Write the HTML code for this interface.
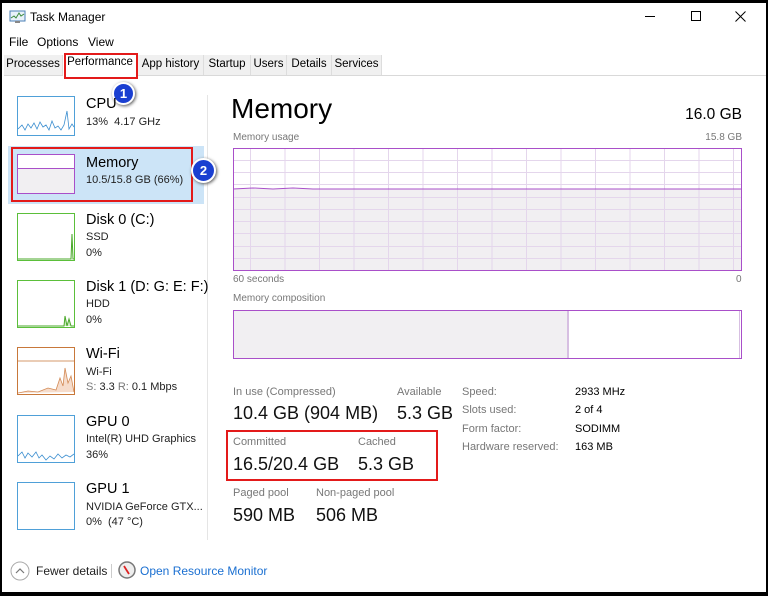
<!DOCTYPE html>
<html><head><meta charset="utf-8"><style>
*{margin:0;padding:0;box-sizing:border-box}
body{width:768px;height:596px;background:#000;font-family:"Liberation Sans",sans-serif;position:relative;overflow:hidden;color:#000}
.win{position:absolute;left:2px;top:3px;width:764px;height:589px;background:#fff}
.a{position:absolute;white-space:nowrap}
.tab{position:absolute;top:55px;height:20px;font-size:11.5px;padding-top:3px;background:#f0f0f0;border-right:1px solid #ddd;text-align:center}
.thumb{position:absolute;left:17px;width:58px;height:48px;border:1px solid}
.t1{font-size:14.5px;left:86px}
.t2{font-size:11px;left:86px;color:#222}
.lbl{font-size:11px;color:#777}
.val{font-size:18px;color:#111}
.sp{font-size:11px}
</style></head><body>
<div class="win"></div>
<svg class="a" style="left:9px;top:10px" width="17" height="14" viewBox="0 0 17 14"><rect x="1" y="1" width="15" height="10" fill="#e8f1fa" stroke="#4a7fb5"/><polyline points="2,8 5,6 7,8 10,3 12,6 15,4" fill="none" stroke="#3a8a3a"/><rect x="6" y="11" width="5" height="2" fill="#888"/></svg>
<div class="a" style="left:30px;top:10px;font-size:12px">Task Manager</div>
<div class="a" style="left:645px;top:16px;width:10px;height:1px;background:#000"></div>
<div class="a" style="left:691px;top:11px;width:10px;height:10px;border:1px solid #000"></div>
<svg class="a" style="left:735px;top:11px" width="11" height="11"><path d="M0.5 0.5L10.5 10.5M10.5 0.5L0.5 10.5" stroke="#000" stroke-width="1"/></svg>
<div class="a" style="left:9px;top:35px;font-size:12px">File</div>
<div class="a" style="left:37px;top:35px;font-size:12px">Options</div>
<div class="a" style="left:88px;top:35px;font-size:12px">View</div>
<div class="a" style="left:4px;top:75px;width:762px;height:1px;background:#d9d9d9"></div>
<div class="tab" style="left:4px;width:59px">Processes</div>
<div class="tab" style="left:63px;width:75px;background:#fff;top:53px;height:23px">Performance</div>
<div class="tab" style="left:138px;width:66px">App history</div>
<div class="tab" style="left:204px;width:47px">Startup</div>
<div class="tab" style="left:251px;width:36px">Users</div>
<div class="tab" style="left:287px;width:45px">Details</div>
<div class="tab" style="left:332px;width:50px">Services</div>
<div class="a" style="left:64px;top:53px;width:74px;height:26px;border:2px solid #e31a1a"></div>
<div class="a" style="left:112px;top:82px;width:23px;height:23px;border-radius:50%;background:#1a3fd1;border:2px solid #fff;box-shadow:1px 1px 3px #555;color:#fff;font-weight:bold;font-size:13px;text-align:center;line-height:19px">1</div>
<div class="a" style="left:207px;top:95px;width:1px;height:445px;background:#e5e5e5"></div>
<div class="a" style="left:8px;top:146px;width:196px;height:58px;background:#cce4f7"></div>
<div class="a" style="left:11px;top:147px;width:182px;height:55px;border:2px solid #e31a1a"></div>
<div class="a" style="left:191px;top:158px;width:25px;height:25px;border-radius:50%;background:#1a3fd1;border:2px solid #fff;box-shadow:1px 1px 3px #555;color:#fff;font-weight:bold;font-size:13px;text-align:center;line-height:21px">2</div>

<div class="thumb" style="top:96px;height:40px;border-color:#4fa0d8"><svg width="56" height="38"><polyline points="0,32 4,28 7,33 10,27 13,31 16,26 19,32 22,25 25,30 28,28 31,33 34,24 37,31 40,29 43,33 46,28 49,14 51,32 54,27 56,30" fill="none" stroke="#3d8fd0" stroke-width="0.8"/></svg></div>
<div class="a t1" style="top:96px">CPU</div>
<div class="a t2" style="top:116px">13%&nbsp; 4.17 GHz</div>

<div class="thumb" style="top:154px;height:40px;border-color:#a94fc9;background:linear-gradient(#fff 0,#fff 13px,#a94fc9 13px,#a94fc9 14px,#f1eff2 14px)"></div>
<div class="a t1" style="top:155px">Memory</div>
<div class="a t2" style="top:174px">10.5/15.8 GB (66%)</div>

<div class="thumb" style="top:213px;border-color:#5bbf3a"><svg width="56" height="46"><polyline points="0,45 50,45 53,45 54,20 55,45 56,45" fill="none" stroke="#4aa82a"/></svg></div>
<div class="a t1" style="top:212px">Disk 0 (C:)</div>
<div class="a t2" style="top:231px">SSD</div>
<div class="a t2" style="top:247px">0%</div>

<div class="thumb" style="top:280px;border-color:#5bbf3a"><svg width="56" height="46"><polyline points="0,45 46,45 47,35 49,45 51,38 53,45 56,45" fill="#cfeec3" stroke="#4aa82a"/></svg></div>
<div class="a t1" style="top:279px">Disk 1 (D: G: E: F:)</div>
<div class="a t2" style="top:298px">HDD</div>
<div class="a t2" style="top:314px">0%</div>

<div class="thumb" style="top:347px;border-color:#c8783a"><svg width="56" height="46"><line x1="0" y1="13" x2="56" y2="13" stroke="#c8783a" stroke-width="0.8"/><polyline points="0,45 10,43 20,44 30,40 38,42 42,30 45,38 47,20 50,35 53,28 56,44" fill="#f6dccb" stroke="#d38a55" stroke-width="0.8"/></svg></div>
<div class="a t1" style="top:346px">Wi-Fi</div>
<div class="a t2" style="top:366px">Wi-Fi</div>
<div class="a t2" style="top:381px"><span style="color:#777">S:</span> 3.3 <span style="color:#777">R:</span> 0.1 Mbps</div>

<div class="thumb" style="top:415px;border-color:#4fa0d8"><svg width="56" height="46"><polyline points="0,40 4,36 7,42 10,37 14,41 18,36 21,42 24,39 28,44 32,40 36,43 40,38 44,42 48,39 52,41 56,38" fill="none" stroke="#3d8fd0" stroke-width="0.8"/></svg></div>
<div class="a t1" style="top:414px">GPU 0</div>
<div class="a t2" style="top:433px">Intel(R) UHD Graphics</div>
<div class="a t2" style="top:449px">36%</div>

<div class="thumb" style="top:482px;border-color:#4fa0d8"></div>
<div class="a t1" style="top:481px">GPU 1</div>
<div class="a t2" style="top:501px">NVIDIA GeForce GTX...</div>
<div class="a t2" style="top:516px">0%&nbsp; (47 °C)</div>

<div class="a" style="left:231px;top:93px;font-size:28px">Memory</div>
<div class="a" style="right:26px;top:106px;font-size:15.5px">16.0 GB</div>
<div class="a lbl" style="left:233px;top:132px;font-size:10px">Memory usage</div>
<div class="a lbl" style="right:26px;top:132px;font-size:10px">15.8 GB</div>
<svg class="a" style="left:233px;top:148px" width="509" height="123">
<rect x="0" y="41" width="509" height="82" fill="#f1eff2"/>
<g stroke="#e4d6ec" stroke-width="1">
<line x1="17.5" y1="0" x2="17.5" y2="123"/><line x1="52" y1="0" x2="52" y2="123"/><line x1="86.5" y1="0" x2="86.5" y2="123"/><line x1="121" y1="0" x2="121" y2="123"/><line x1="155.5" y1="0" x2="155.5" y2="123"/><line x1="190" y1="0" x2="190" y2="123"/><line x1="224.5" y1="0" x2="224.5" y2="123"/><line x1="259" y1="0" x2="259" y2="123"/><line x1="293.5" y1="0" x2="293.5" y2="123"/><line x1="328" y1="0" x2="328" y2="123"/><line x1="362.5" y1="0" x2="362.5" y2="123"/><line x1="397" y1="0" x2="397" y2="123"/><line x1="431.5" y1="0" x2="431.5" y2="123"/><line x1="466" y1="0" x2="466" y2="123"/><line x1="500.5" y1="0" x2="500.5" y2="123"/>
<line x1="0" y1="12.5" x2="509" y2="12.5"/><line x1="0" y1="24.5" x2="509" y2="24.5"/><line x1="0" y1="36.5" x2="509" y2="36.5"/><line x1="0" y1="49.5" x2="509" y2="49.5"/><line x1="0" y1="61.5" x2="509" y2="61.5"/><line x1="0" y1="73.5" x2="509" y2="73.5"/><line x1="0" y1="85.5" x2="509" y2="85.5"/><line x1="0" y1="98.5" x2="509" y2="98.5"/><line x1="0" y1="110.5" x2="509" y2="110.5"/>
</g>
<polyline points="0,41 20,40 40,41 60,40 80,41 509,41" fill="none" stroke="#a94fc9" stroke-width="1"/>
<rect x="0.5" y="0.5" width="508" height="122" fill="none" stroke="#a94fc9"/>
</svg>
<div class="a lbl" style="left:233px;top:274px;font-size:10px">60 seconds</div>
<div class="a lbl" style="left:736px;top:274px;font-size:10px">0</div>
<div class="a lbl" style="left:233px;top:293px;font-size:10px">Memory composition</div>
<div class="a" style="left:233px;top:310px;width:509px;height:49px;border:1px solid #a94fc9;background:#fff">
<div style="position:absolute;left:0;top:0;width:335px;height:47px;background:#f1eff2;border-right:2px solid #d7bfe2"></div>
<div style="position:absolute;right:1px;top:0;width:1px;height:47px;background:#d7bfe2"></div></div>

<div class="a lbl" style="left:233px;top:386px">In use (Compressed)</div>
<div class="a val" style="left:233px;top:403px">10.4 GB (904 MB)</div>
<div class="a lbl" style="left:397px;top:386px">Available</div>
<div class="a val" style="left:397px;top:403px">5.3 GB</div>
<div class="a lbl" style="left:233px;top:436px">Committed</div>
<div class="a val" style="left:233px;top:454px">16.5/20.4 GB</div>
<div class="a lbl" style="left:358px;top:436px">Cached</div>
<div class="a val" style="left:358px;top:454px">5.3 GB</div>
<div class="a" style="left:226px;top:430px;width:212px;height:51px;border:2px solid #e31a1a"></div>
<div class="a lbl" style="left:233px;top:487px">Paged pool</div>
<div class="a val" style="left:233px;top:505px">590 MB</div>
<div class="a lbl" style="left:316px;top:487px">Non-paged pool</div>
<div class="a val" style="left:316px;top:505px">506 MB</div>

<div class="a sp lbl" style="left:462px;top:386px">Speed:</div>
<div class="a sp" style="left:575px;top:386px">2933 MHz</div>
<div class="a sp lbl" style="left:462px;top:404px">Slots used:</div>
<div class="a sp" style="left:575px;top:404px">2 of 4</div>
<div class="a sp lbl" style="left:462px;top:423px">Form factor:</div>
<div class="a sp" style="left:575px;top:423px">SODIMM</div>
<div class="a sp lbl" style="left:462px;top:441px">Hardware reserved:</div>
<div class="a sp" style="left:575px;top:441px">163 MB</div>

<svg class="a" style="left:10px;top:561px" width="20" height="20"><circle cx="10" cy="10" r="9" fill="#fff" stroke="#aaa"/><polyline points="6,12 10,8 14,12" fill="none" stroke="#777" stroke-width="1.2"/></svg>
<div class="a" style="left:36px;top:564px;font-size:12px;color:#222">Fewer details</div>
<div class="a" style="left:111px;top:564px;width:1px;height:14px;background:#ccc"></div>
<svg class="a" style="left:118px;top:561px" width="18" height="18"><circle cx="9" cy="9" r="8" fill="#eee" stroke="#777" stroke-width="1.5"/><line x1="6" y1="5" x2="11" y2="13" stroke="#d22" stroke-width="1.8"/></svg>
<div class="a" style="left:140px;top:564px;font-size:12px;color:#1a6fd1">Open Resource Monitor</div>
</body></html>
